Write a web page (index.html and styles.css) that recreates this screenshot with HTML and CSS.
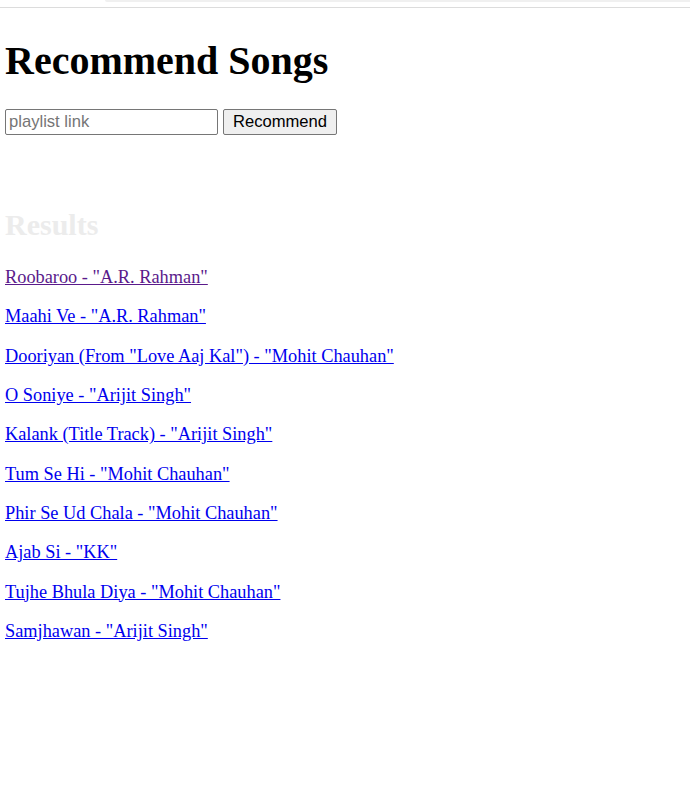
FILE: index.html
```html
<!DOCTYPE html>
<html lang="en">
<head>
    <meta charset="UTF-8">
    <meta name="viewport" content="width=device-width, initial-scale=1.0">
    <title>Recommend Songs</title>
    <link rel="stylesheet" href="styles.css">
</head>
<body>
    <div class="top-strip"><div class="top-tab"></div></div>

    <div class="page">
        <h1>Recommend Songs</h1>

        <form class="search" onsubmit="return false;">
            <input type="text" class="search-input" placeholder="playlist link">
            <button type="submit" class="search-button">Recommend</button>
        </form>

        <h2 class="results-title">Results</h2>

        <div class="results">
            <p><a href="#" class="visited">Roobaroo - "A.R. Rahman"</a></p>
            <p><a href="#">Maahi Ve - "A.R. Rahman"</a></p>
            <p><a href="#">Dooriyan (From "Love Aaj Kal") - "Mohit Chauhan"</a></p>
            <p><a href="#">O Soniye - "Arijit Singh"</a></p>
            <p><a href="#">Kalank (Title Track) - "Arijit Singh"</a></p>
            <p><a href="#">Tum Se Hi - "Mohit Chauhan"</a></p>
            <p><a href="#">Phir Se Ud Chala - "Mohit Chauhan"</a></p>
            <p><a href="#">Ajab Si - "KK"</a></p>
            <p><a href="#">Tujhe Bhula Diya - "Mohit Chauhan"</a></p>
            <p><a href="#">Samjhawan - "Arijit Singh"</a></p>
        </div>
    </div>
</body>
</html>
```

FILE: styles.css
```css
body {
    margin: 0;
    padding: 0;
    font-family: 'Liberation Serif', 'Times New Roman', serif;
    background: #fff;
    color: #000;
}

.top-strip {
    height: 7px;
    border-bottom: 1px solid #dcdcdc;
    padding-left: 105px;
}

.top-tab {
    height: 2px;
    background-color: #f0f0f0;
    border-bottom-left-radius: 4px;
}

.page {
    padding: 0 5px;
}

h1 {
    font-size: 40px;
    font-weight: bold;
    margin: 29px 0 25px;
}

.search {
    display: flex;
    gap: 5px;
    margin: 0;
}

.search-input {
    width: 213px;
    height: 26px;
    box-sizing: border-box;
    border: 1px solid #767676;
    border-radius: 2px;
    padding: 1px 3px;
    font-family: 'Liberation Sans', Arial, sans-serif;
    font-size: 16.6px;
    color: #000;
}

.search-input::placeholder {
    color: #757575;
}

.search-button {
    width: 114px;
    height: 26px;
    box-sizing: border-box;
    border: 1px solid #767676;
    border-radius: 2px;
    background-color: #efefef;
    font-family: 'Liberation Sans', Arial, sans-serif;
    font-size: 16.6px;
    color: #000;
    padding: 0 6px;
}

.results-title {
    font-size: 30px;
    font-weight: bold;
    color: #ececec;
    margin: 73px 0 25px;
}

.results p {
    font-size: 18.33px;
    margin: 0 0 18.33px;
}

.results a {
    color: #0000ee;
}

.results a.visited {
    color: #5a1a8b;
}
```
